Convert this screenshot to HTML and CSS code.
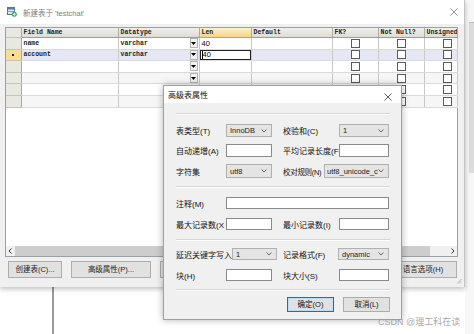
FILE: index.html
```html
<!DOCTYPE html>
<html>
<head>
	<meta charset="utf-8">
	<title>新建表于 'testchat'</title>
	<link rel="stylesheet" href="styles.css">
</head>
<body>
<div class="desk">
	<div class="bg-strip"><div class="bg-bar"></div></div>
	<div class="bg-line"></div>

	<div class="win">
		<div class="win-title">
			<svg class="win-icon" width="10" height="10" viewBox="0 0 10 10">
				<rect x="0.5" y="0.5" width="7" height="7" fill="#dfe6ef" stroke="#5a6f8c"/>
				<rect x="0.5" y="0.5" width="7" height="2" fill="#5a7fb0"/>
				<line x1="0.5" y1="4.5" x2="7.5" y2="4.5" stroke="#8ea2bd"/>
				<circle cx="7.3" cy="7.3" r="2.5" fill="#2aa86a"/>
				<path d="M7.3 5.8v3M5.8 7.3h3" stroke="#fff" stroke-width="0.9"/>
			</svg>
			<span class="win-name">新建表于 'testchat'</span>
			<svg class="win-close" width="8" height="8" viewBox="0 0 8 8">
				<path d="M0.5 0.5L7.5 7.5M7.5 0.5L0.5 7.5" stroke="#8a8a8a" stroke-width="0.9"/>
			</svg>
		</div>

		<div class="grid-box">
			<table class="grid">
				<colgroup>
					<col style="width:15px"><col style="width:97px"><col style="width:81px"><col style="width:52px">
					<col style="width:81px"><col style="width:46px"><col style="width:46px"><col style="width:33px">
				</colgroup>
				<tr class="hd">
					<th class="rh"></th><th>Field Name</th><th>Datatype</th><th class="on">Len</th>
					<th>Default</th><th>FK?</th><th>Not Null?</th><th>Unsigned</th>
				</tr>
				<tr>
					<td class="rh"></td><td>name</td>
					<td><div class="dt"><span>varchar</span><span class="dd"><svg width="5" height="3"><path d="M0 0h5l-2.5 3z"/></svg></span></div></td>
					<td class="num">40</td><td></td>
					<td class="ck"><i></i></td><td class="ck"><i></i></td><td class="ck us"><i></i></td>
				</tr>
				<tr class="sel">
					<td class="rh cur"><b></b></td><td>account</td>
					<td><div class="dt"><span>varchar</span><span class="dd"><svg width="5" height="3"><path d="M0 0h5l-2.5 3z"/></svg></span></div></td>
					<td class="num edit"><span class="caret"></span>40</td><td></td>
					<td class="ck"><i></i></td><td class="ck"><i></i></td><td class="ck us"><i></i></td>
				</tr>
				<tr>
					<td class="rh"></td><td></td>
					<td><div class="dt"><span></span><span class="dd"><svg width="5" height="3"><path d="M0 0h5l-2.5 3z"/></svg></span></div></td>
					<td></td><td></td>
					<td class="ck"><i></i></td><td class="ck"><i></i></td><td class="ck us"><i></i></td>
				</tr>
				<tr class="alt">
					<td class="rh"></td><td></td>
					<td><div class="dt"><span></span><span class="dd"><svg width="5" height="3"><path d="M0 0h5l-2.5 3z"/></svg></span></div></td>
					<td></td><td></td>
					<td class="ck"><i></i></td><td class="ck"><i></i></td><td class="ck us"><i></i></td>
				</tr>
				<tr>
					<td class="rh"></td><td></td>
					<td><div class="dt"><span></span><span class="dd"><svg width="5" height="3"><path d="M0 0h5l-2.5 3z"/></svg></span></div></td>
					<td></td><td></td>
					<td class="ck"><i></i></td><td class="ck"><i></i></td><td class="ck us"><i></i></td>
				</tr>
				<tr class="alt">
					<td class="rh"></td><td></td>
					<td><div class="dt"><span></span><span class="dd"><svg width="5" height="3"><path d="M0 0h5l-2.5 3z"/></svg></span></div></td>
					<td></td><td></td>
					<td class="ck"><i></i></td><td class="ck"><i></i></td><td class="ck us"><i></i></td>
				</tr>
			</table>
			<div class="grid-fill"></div>
			<div class="hscroll">
				<span class="arr"><svg width="5" height="6"><path d="M3.5 0.5L1 3l2.5 2.5" fill="none" stroke="#333"/></svg></span>
				<div class="thumb"></div>
				<div class="track"></div>
				<span class="arr"><svg width="5" height="6"><path d="M1.5 0.5L4 3 1.5 5.5" fill="none" stroke="#333"/></svg></span>
			</div>
		</div>

		<div class="btns">
			<div class="btn b1">创建表(C)...</div>
			<div class="btn b2">高级属性(P)...</div>
			<div class="btn b3"></div>
			<div class="btn b4">语言选项(H)</div>
		</div>
		<svg class="grip" width="6" height="6" viewBox="0 0 6 6">
			<path d="M5.5 1L1 5.5M5.5 3L3 5.5M5.5 5L5 5.5" stroke="#aaa" stroke-width="0.8"/>
		</svg>
	</div>

	<div class="dlg">
		<div class="dlg-title">
			<span>高级表属性</span>
			<svg width="8" height="8" viewBox="0 0 8 8"><path d="M0.5 0.5L7.5 7.5M7.5 0.5L0.5 7.5" stroke="#333" stroke-width="0.8"/></svg>
		</div>
		<div class="dlg-body">
			<div class="sep s1"></div>
			<div class="frow r1">
				<span class="lab l1">表类型(T)</span>
				<div class="pick c1">InnoDB<svg width="6" height="4"><path d="M0.5 0.5L3 3l2.5-2.5" fill="none" stroke="#666"/></svg></div>
				<span class="lab l2">校验和(C)</span>
				<div class="pick c2">1<svg width="6" height="4"><path d="M0.5 0.5L3 3l2.5-2.5" fill="none" stroke="#666"/></svg></div>
			</div>
			<div class="frow r2">
				<span class="lab l1">自动递增(A)</span>
				<div class="box c1"></div>
				<span class="lab l2">平均记录长度(F</span>
				<div class="box c2"></div>
			</div>
			<div class="frow r3">
				<span class="lab l1">字符集</span>
				<div class="pick c1">utf8<svg width="6" height="4"><path d="M0.5 0.5L3 3l2.5-2.5" fill="none" stroke="#666"/></svg></div>
				<span class="lab l3">校对规则(N)</span>
				<div class="pick c3">utf8_unicode_c<svg width="6" height="4"><path d="M0.5 0.5L3 3l2.5-2.5" fill="none" stroke="#666"/></svg></div>
			</div>
			<div class="sep s2"></div>
			<div class="frow r4">
				<span class="lab l1">注释(M)</span>
				<div class="box c4"></div>
			</div>
			<div class="frow r5">
				<span class="lab l1">最大记录数(X</span>
				<div class="box c1"></div>
				<span class="lab l2">最小记录数(I)</span>
				<div class="box c2"></div>
			</div>
			<div class="sep s3"></div>
			<div class="frow r6">
				<span class="lab l4">延迟关键字写入</span>
				<div class="pick c5">1<svg width="6" height="4"><path d="M0.5 0.5L3 3l2.5-2.5" fill="none" stroke="#666"/></svg></div>
				<span class="lab l5">记录格式(F)</span>
				<div class="pick c6">dynamic<svg width="6" height="4"><path d="M0.5 0.5L3 3l2.5-2.5" fill="none" stroke="#666"/></svg></div>
			</div>
			<div class="frow r7">
				<span class="lab l1">块(H)</span>
				<div class="box c1"></div>
				<span class="lab l2">块大小(S)</span>
				<div class="box c2"></div>
			</div>
			<div class="sep s4"></div>
			<div class="dlg-btns">
				<div class="dbtn ok">确定(O)</div>
				<div class="dbtn">取消(L)</div>
			</div>
		</div>
	</div>

	<div class="wm">CSDN @理工科在读</div>
</div>
</body>
</html>
```

FILE: styles.css
```css
html, body {
	margin: 0;
	padding: 0;
	background: #fff;
}
.desk {
	position: relative;
	width: 474px;
	height: 334px;
	overflow: hidden;
	font-family: "Liberation Sans", "Noto Sans CJK SC", sans-serif;
}

/* bits of other windows behind */
.bg-strip {
	position: absolute;
	left: 465px;
	top: 0;
	width: 9px;
	height: 334px;
	background: #f7f7f7;
}
.bg-bar {
	margin: 22px 0 0 4px;
	width: 5px;
	height: 150px;
	background: #dcdcdc;
	border-top: 1px solid #bbb;
}
.bg-line {
	position: absolute;
	left: 52px;
	top: 287px;
	width: 2px;
	height: 47px;
	background: #9a9a9a;
}

/* main window */
.win {
	position: relative;
	width: 464px;
	height: 287px;
	background: #f0f0f0;
	border-right: 1px solid #c4c4c4;
	box-shadow: 0 2px 5px rgba(0,0,0,0.25);
	display: flex;
	flex-direction: column;
}
.win-title {
	height: 24px;
	background: #fff;
	display: flex;
	align-items: center;
	padding: 0 6px 0 7px;
	flex-shrink: 0;
}
.win-icon {
	margin-right: 6px;
}
.win-name {
	font-size: 7.5px;
	color: #808080;
	flex: 1;
}
.win-close {
	margin-top: -1px;
}

.grid-box {
	margin: 3px 0 0 5px;
	width: 451px;
	height: 228px;
	border: 1px solid #9aa0a8;
	background: #fff;
	display: flex;
	flex-direction: column;
}
.grid {
	border-collapse: collapse;
	table-layout: fixed;
	width: 451px;
	font: bold 6.5px "Liberation Mono", "DejaVu Sans Mono", monospace;
	color: #222;
}
.grid th, .grid td {
	padding: 0 0 0 2px;
	height: 10.6px;
	border-right: 1px solid #c8c8c8;
	border-bottom: 1px solid #dadada;
	text-align: left;
	white-space: nowrap;
	overflow: hidden;
}
.grid .hd th {
	height: 9px;
	background: linear-gradient(to bottom, #f0efea 0%, #dddcd4 100%);
	border-right: 1px solid #aaa;
	border-bottom: 1px solid #9c9c9c;
}
.grid .hd th.on {
	background: linear-gradient(to bottom, #fdf1cf 0%, #f6d384 100%);
	border-bottom: 1px solid #e0a030;
}
.grid td.rh, .grid th.rh {
	padding: 0;
	background: #e8e7e0;
	border-right: 1px solid #a8a8a8;
	border-bottom: 1px solid #c4c4bc;
}
.grid td.rh.cur {
	background: #f8dd94;
	text-align: center;
}
.grid td.rh.cur b {
	display: inline-block;
	width: 2px;
	height: 2px;
	background: #222;
	vertical-align: middle;
}
.grid tr.sel td {
	background: #e5e8f4;
}
.grid tr.sel td.rh {
	background: #f8dd94;
}
.grid tr.alt td {
	background: #f6f6f6;
}
.grid tr.alt td.rh {
	background: #e8e7e0;
}
.grid td.num {
	font: 7.5px "Liberation Sans", sans-serif;
	color: #000;
}
.grid tr.sel td.edit {
	background: #fff;
	box-shadow: inset 0 0 0 1px #222;
}
.caret {
	display: inline-block;
	width: 1px;
	height: 8px;
	background: #000;
	vertical-align: middle;
}
.dt {
	display: flex;
	justify-content: space-between;
	align-items: center;
	padding-right: 1px;
}
.dd {
	width: 6px;
	height: 8px;
	background: #f2f2f2;
	border: 1px solid #b4b4b4;
	display: flex;
	align-items: center;
	justify-content: center;
}
.grid td.ck {
	text-align: center;
	padding: 0;
}
.grid td.ck.us {
	padding-left: 13px;
}
.grid td.ck i {
	display: inline-block;
	width: 7px;
	height: 7px;
	border: 1px solid #5a5a5a;
	background: #fff;
	vertical-align: middle;
}
.grid-fill {
	flex: 1;
}
.hscroll {
	height: 10px;
	background: #f0f0f0;
	display: flex;
	align-items: stretch;
}
.hscroll .arr {
	width: 9px;
	display: flex;
	align-items: center;
	justify-content: center;
}
.hscroll .thumb {
	width: 415px;
	background: #cdcdcd;
}
.hscroll .track {
	flex: 1;
}

.btns {
	display: flex;
	padding: 4px 7px 0 8px;
	gap: 9px;
}
.btn {
	height: 15px;
	line-height: 15px;
	background: #e1e1e1;
	border: 1px solid #adadad;
	font-size: 7.5px;
	color: #222;
	text-align: center;
}
.b1 { width: 52px; }
.b2 { width: 78px; }
.b3 { width: 78px; }
.b4 { width: 66px; margin-left: auto; }
.grip {
	position: absolute;
	right: 2px;
	bottom: 3px;
}

/* advanced properties dialog */
.dlg {
	position: absolute;
	left: 163px;
	top: 85px;
	width: 237px;
	height: 233px;
	background: #f0f0f0;
	border: 1px solid #a0a0a0;
	box-shadow: 0 0 7px rgba(0,0,0,0.3);
	display: flex;
	flex-direction: column;
}
.dlg-title {
	height: 17px;
	background: #fff;
	display: flex;
	align-items: center;
	justify-content: space-between;
	padding: 0 9px 0 4px;
	font-size: 8px;
	color: #111;
}
.dlg-title svg {
	margin-top: 4px;
}
.dlg-body {
	padding: 0 11px 0 12px;
	font-size: 8px;
	color: #111;
}
.sep {
	height: 1px;
	background: #d5d5d5;
	border-bottom: 1px solid #fff;
}
.s1 { margin-top: 10px; }
.s2 { margin-top: 8px; }
.s3 { margin-top: 9px; }
.s4 { margin-top: 8px; }
.frow {
	display: flex;
	align-items: center;
	height: 13px;
}
.r1 { margin-top: 9px; }
.r2 { margin-top: 7px; }
.r3 { margin-top: 7px; height: 14px; }
.r4 { margin-top: 9px; height: 12px; }
.r5 { margin-top: 9px; height: 12px; }
.r6 { margin-top: 7px; height: 12px; }
.r7 { margin-top: 9px; height: 12px; }
.lab {
	white-space: nowrap;
	overflow: hidden;
	flex-shrink: 0;
}
.l1 { width: 50px; }
.l2 { width: 56px; margin-left: 11px; }
.l3 { width: 41px; margin-left: 11px; font-size: 7.5px; letter-spacing: -0.3px; overflow: visible; }
.l4 { width: 56px; }
.l5 { width: 55px; margin-left: 6px; }
.box, .pick {
	box-sizing: border-box;
	height: 100%;
	flex-shrink: 0;
}
.box {
	background: #fff;
	border: 1px solid #8a8a8a;
}
.pick {
	background: #e4e4e4;
	border: 1px solid #b0b0b0;
	display: flex;
	align-items: center;
	justify-content: space-between;
	padding: 0 4px 0 3px;
	font-size: 7.5px;
	color: #222;
}
.c1 { width: 46px; }
.c2 { width: 50px; }
.c3 { width: 65px; padding-left: 2px; }
.c4 { width: 163px; }
.c5 { width: 45px; }
.c6 { width: 51px; }
.dlg-btns {
	display: flex;
	justify-content: flex-end;
	gap: 9px;
	margin-top: 6px;
}
.dbtn {
	width: 45px;
	height: 13px;
	line-height: 13px;
	background: #e1e1e1;
	border: 1px solid #adadad;
	text-align: center;
	font-size: 7.5px;
}
.dbtn.ok {
	border-color: #0078d7;
	box-shadow: inset 0 0 0 1px #bcdcf4;
}

.wm {
	position: absolute;
	left: 378px;
	top: 315px;
	font-size: 9px;
	color: rgba(150,150,150,0.85);
	white-space: nowrap;
}
```
